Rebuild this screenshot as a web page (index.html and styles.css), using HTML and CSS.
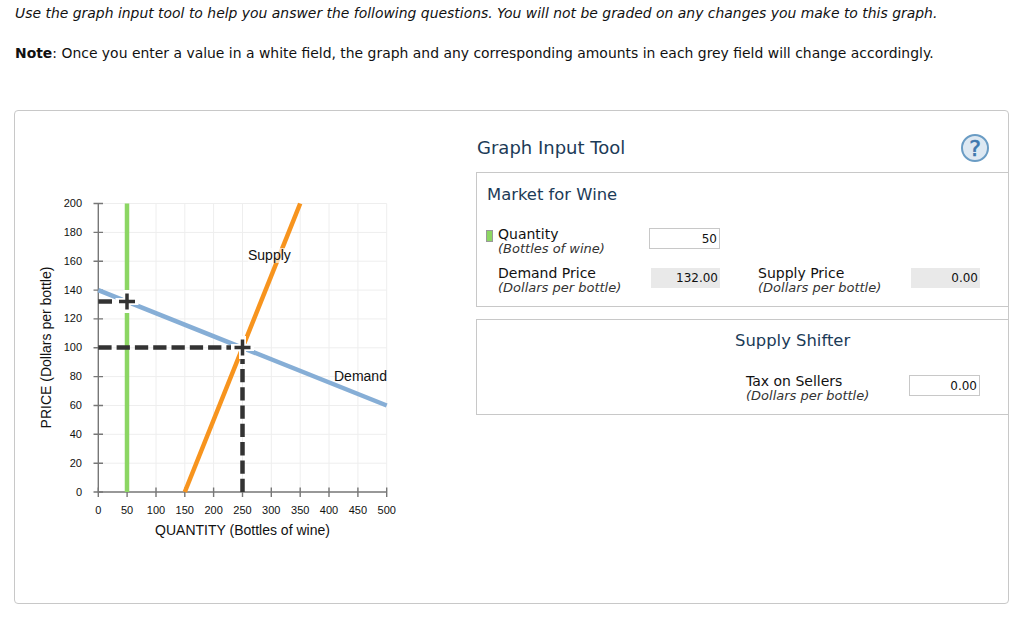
FILE: index.html
```html
<!DOCTYPE html>
<html lang="en">

<head>
    <meta charset="UTF-8">
    <title>Graph Input Tool</title>
    <link rel="stylesheet" href="styles.css">
</head>

<body>
    <p class="intro"><em>Use the graph input tool to help you answer the following questions. You will not be graded on any changes you make to this graph.</em></p>
    <p class="note"><strong>Note</strong>: Once you enter a value in a white field, the graph and any corresponding amounts in each grey field will change accordingly.</p>

    <div class="panel">
        <svg class="graph" width="380" height="360" viewBox="30 190 380 360">
            <g class="grid">
                <path d="M127.1 203.5V492M156 203.5V492M184.8 203.5V492M213.6 203.5V492M242.5 203.5V492M271.3 203.5V492M300.2 203.5V492M329 203.5V492M357.9 203.5V492M386.7 203.5V492"/>
                <path d="M98.3 203.5H386.7M98.3 232.4H386.7M98.3 261.2H386.7M98.3 290.1H386.7M98.3 318.9H386.7M98.3 347.8H386.7M98.3 376.6H386.7M98.3 405.5H386.7M98.3 434.3H386.7M98.3 463.2H386.7"/>
            </g>

            <g class="axis">
                <path d="M98.3 203.5V492H386.7"/>
                <path d="M93.5 203.5H103M93.5 232.4H103M93.5 261.2H103M93.5 290.1H103M93.5 318.9H103M93.5 347.8H103M93.5 376.6H103M93.5 405.5H103M93.5 434.3H103M93.5 463.2H103M93.5 492H103"/>
                <path d="M98.3 487.5V497M127.1 487.5V497M156 487.5V497M184.8 487.5V497M213.6 487.5V497M242.5 487.5V497M271.3 487.5V497M300.2 487.5V497M329 487.5V497M357.9 487.5V497M386.7 487.5V497"/>
            </g>

            <g class="tick-y">
                <text x="82" y="207">200</text>
                <text x="82" y="236">180</text>
                <text x="82" y="265">160</text>
                <text x="82" y="294">140</text>
                <text x="82" y="322">120</text>
                <text x="82" y="351">100</text>
                <text x="82" y="380">80</text>
                <text x="82" y="409">60</text>
                <text x="82" y="438">40</text>
                <text x="82" y="467">20</text>
                <text x="82" y="496">0</text>
            </g>
            <g class="tick-x">
                <text x="98.3" y="514">0</text>
                <text x="127.1" y="514">50</text>
                <text x="156" y="514">100</text>
                <text x="184.8" y="514">150</text>
                <text x="213.6" y="514">200</text>
                <text x="242.5" y="514">250</text>
                <text x="271.3" y="514">300</text>
                <text x="300.2" y="514">350</text>
                <text x="329" y="514">400</text>
                <text x="357.9" y="514">450</text>
                <text x="386.7" y="514">500</text>
            </g>
            <text class="axis-title" x="242.5" y="535">QUANTITY (Bottles of wine)</text>
            <text class="axis-title" transform="translate(51 347.5) rotate(-90)">PRICE (Dollars per bottle)</text>

            <path class="line-qty" d="M127 203.5V492"/>
            <path class="line-supply" d="M184.8 492L300.2 203.5"/>
            <path class="line-demand" d="M98.3 290.1L386.7 405.5"/>

            <path class="dash" d="M98.3 347.5H233"/>
            <path class="dash" d="M242.5 492V358"/>
            <path class="dash-short" d="M98.3 301.5H112"/>

            <path class="halo" d="M119 301.5H135M127 293.5V309.5"/>
            <path class="cross" d="M119 301.5H135M127 293.5V309.5"/>
            <path class="halo" d="M234.5 347.5H250.5M242.5 339.5V355.5"/>
            <path class="cross" d="M234.5 347.5H250.5M242.5 339.5V355.5"/>

            <rect class="label-bg" x="248" y="248" width="44" height="15"/>
            <text class="curve-label" x="248" y="260">Supply</text>
            <text class="curve-label" x="334" y="381">Demand</text>
        </svg>

        <div class="tool">
            <div class="tool-head">
                <h2>Graph Input Tool</h2>
                <svg class="help" width="30" height="30" viewBox="0 0 30 30">
                    <circle cx="15" cy="15" r="13"/>
                    <text x="15" y="23">?</text>
                </svg>
            </div>

            <div class="section">
                <h3>Market for Wine</h3>
                <div class="row row-first">
                    <span class="marker"></span>
                    <div class="label">Quantity<br><i>(Bottles of wine)</i></div>
                    <div class="field">50</div>
                </div>
                <div class="row">
                    <span></span>
                    <div class="label">Demand Price<br><i>(Dollars per bottle)</i></div>
                    <div class="field grey">132.00</div>
                    <span></span>
                    <div class="label">Supply Price<br><i>(Dollars per bottle)</i></div>
                    <div class="field grey">0.00</div>
                </div>
            </div>

            <div class="section shifter">
                <h3>Supply Shifter</h3>
                <div class="shifter-row">
                    <div class="label">Tax on Sellers<br><i>(Dollars per bottle)</i></div>
                    <div class="field">0.00</div>
                </div>
            </div>
        </div>
    </div>
</body>

</html>
```

FILE: styles.css
```css
body {
    font-family: 'DejaVu Sans', Verdana, sans-serif;
    font-size: 13.93px;
    color: #111;
    margin: 0;
    background-color: white;
}

.intro {
    margin: 0;
    padding: 5px 0 0 15px;
    line-height: 16px;
}

.note {
    margin: 0;
    padding: 24px 0 0 15px;
    line-height: 16px;
}

.panel {
    display: flex;
    box-sizing: border-box;
    width: 995px;
    height: 494px;
    margin: 49px 0 0 14px;
    border: 1px solid #c8c8c8;
    border-radius: 4px;
}

.graph {
    flex: none;
    margin: 79px 66px 0 15px;
}

.grid path {
    fill: none;
    stroke: #eeeeee;
    stroke-width: 1;
}

.axis path {
    fill: none;
    stroke: #777777;
    stroke-width: 1.4;
}

.tick-y text,
.tick-x text,
.axis-title,
.curve-label {
    font-family: 'Liberation Sans', Arial, sans-serif;
    fill: #111;
}

.tick-y text {
    font-size: 11px;
    text-anchor: end;
}

.tick-x text {
    font-size: 11px;
    text-anchor: middle;
}

.axis-title {
    font-size: 14px;
    text-anchor: middle;
}

.curve-label {
    font-size: 14px;
}

.label-bg {
    fill: white;
    opacity: 0.65;
}

.line-qty,
.line-supply,
.line-demand,
.dash,
.dash-short,
.halo,
.cross {
    fill: none;
}

.line-qty {
    stroke: #8cd663;
    stroke-width: 4.5;
}

.line-supply {
    stroke: #f7941e;
    stroke-width: 4.5;
}

.line-demand {
    stroke: #86aed6;
    stroke-width: 4.5;
}

.dash {
    stroke: #333333;
    stroke-width: 4.5;
    stroke-dasharray: 13.3 5;
}

.dash-short {
    stroke: #333333;
    stroke-width: 4.5;
}

.halo {
    stroke: white;
    stroke-width: 7;
    stroke-linecap: square;
}

.cross {
    stroke: #333333;
    stroke-width: 3.5;
}

.tool {
    flex: 1;
    min-width: 0;
}

.tool-head {
    display: flex;
    box-sizing: border-box;
    justify-content: space-between;
    align-items: center;
    height: 61px;
    padding: 12px 18px 0 1px;
}

h2 {
    margin: 0;
    font-size: 18px;
    font-weight: normal;
    color: #1c3b57;
}

h3 {
    margin: 0;
    font-size: 16.4px;
    line-height: 20px;
    font-weight: normal;
    color: #1c3b57;
}

.help circle {
    fill: #dde8f2;
    stroke: #6a9cc4;
    stroke-width: 2;
}

.help text {
    font-size: 22px;
    text-anchor: middle;
    fill: #3e78ae;
    stroke: #3e78ae;
    stroke-width: 0.6;
}

.section {
    box-sizing: border-box;
    height: 135px;
    padding: 12px 0 0 10px;
    border: 1px solid #c8c8c8;
    border-right: none;
}

.row {
    display: grid;
    grid-template-columns: 11px 151px 71px 38px 153px 69px;
    margin-top: 11px;
}

.row-first {
    margin-top: 23px;
}

.marker {
    box-sizing: border-box;
    width: 7px;
    height: 12px;
    margin: 2px 0 0 -1px;
    background-color: #8cd663;
    border: 1px solid #999999;
}

.label {
    margin-top: -1px;
    font-size: 14px;
    line-height: 14px;
}

.label i {
    font-size: 13px;
    color: #333;
}

.field {
    box-sizing: border-box;
    width: 71px;
    height: 21px;
    padding-right: 2px;
    border: 1px solid #c8c8c8;
    font-size: 12px;
    line-height: 20px;
    text-align: right;
}

.field.grey {
    justify-self: end;
    width: 69px;
    height: 20px;
    margin-top: 1px;
    border: none;
    background-color: #e9e9e9;
    line-height: 21px;
}

.shifter {
    height: 96px;
    margin-top: 12px;
    padding: 11px 0 0 258px;
}

.shifter-row {
    display: flex;
    margin: 24px 0 0 11px;
}

.shifter-row .label {
    width: 163px;
}
```
